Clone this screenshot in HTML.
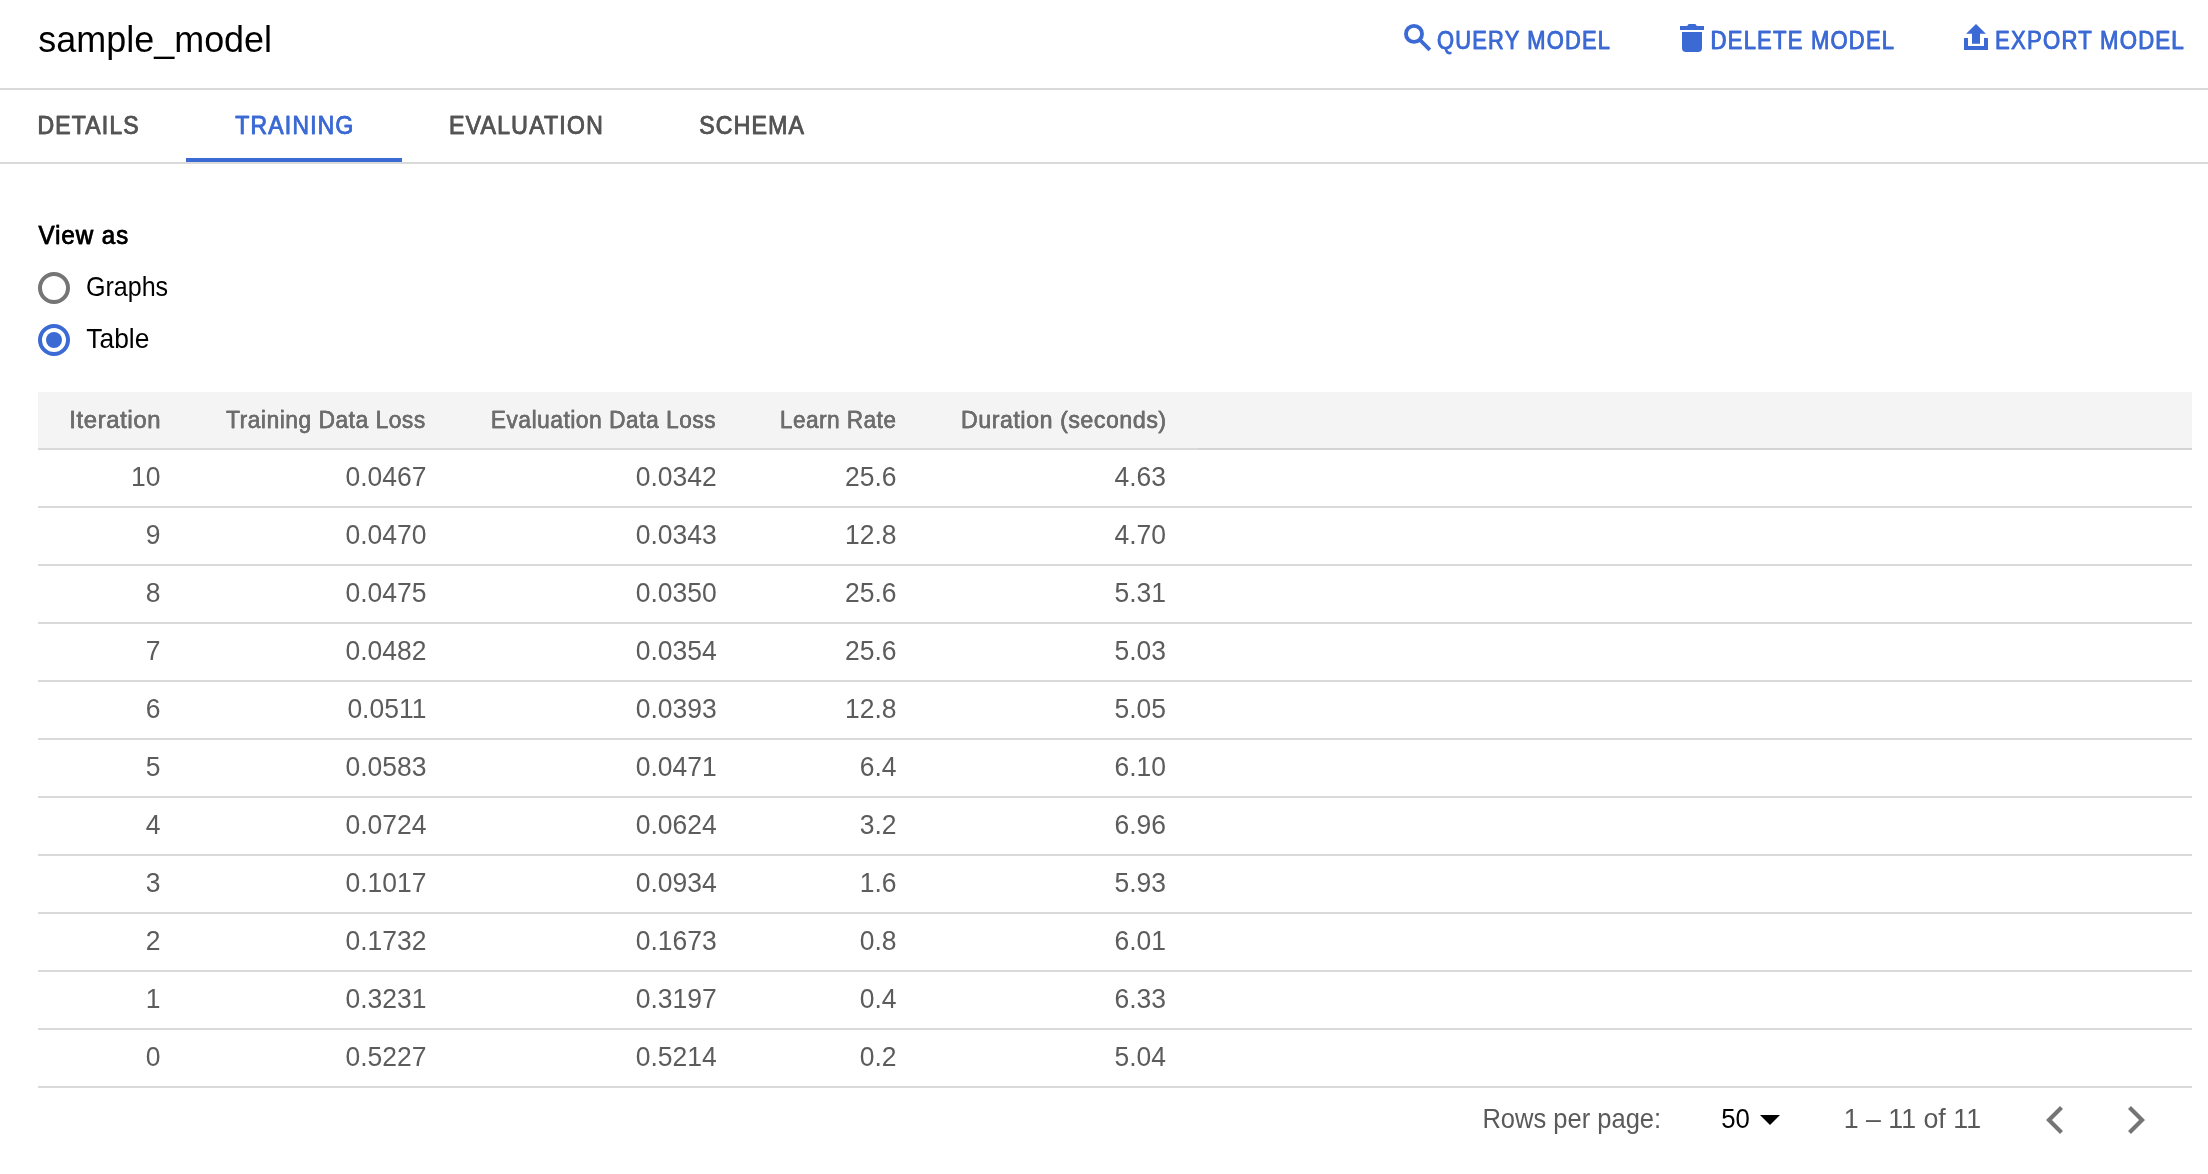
<!DOCTYPE html>
<html><head><meta charset="utf-8"><title>sample_model</title>
<style>html,body{margin:0;padding:0;background:#fff;width:2208px;height:1174px;overflow:hidden;font-family:"Liberation Sans",sans-serif}svg{position:absolute;left:0;top:0;display:block;will-change:transform}</style></head>
<body><svg width="2208" height="1174" viewBox="0 0 2208 1174">
<rect x="0" y="88" width="2208" height="2" fill="#dadada"/>
<rect x="0" y="162" width="2208" height="2" fill="#dadada"/>
<rect x="186" y="158" width="216" height="4" fill="#3c6ad4"/>
<rect x="38" y="392" width="2154" height="56" fill="#f4f4f4"/>
<rect x="38" y="448" width="2154" height="2" fill="#dadada"/>
<rect x="38" y="506" width="2154" height="2" fill="#dadada"/>
<rect x="38" y="564" width="2154" height="2" fill="#dadada"/>
<rect x="38" y="622" width="2154" height="2" fill="#dadada"/>
<rect x="38" y="680" width="2154" height="2" fill="#dadada"/>
<rect x="38" y="738" width="2154" height="2" fill="#dadada"/>
<rect x="38" y="796" width="2154" height="2" fill="#dadada"/>
<rect x="38" y="854" width="2154" height="2" fill="#dadada"/>
<rect x="38" y="912" width="2154" height="2" fill="#dadada"/>
<rect x="38" y="970" width="2154" height="2" fill="#dadada"/>
<rect x="38" y="1028" width="2154" height="2" fill="#dadada"/>
<rect x="38" y="1086" width="2154" height="2" fill="#dadada"/>
<rect x="1198" y="448" width="994" height="2" fill="#d3d3d3"/>
<circle cx="54" cy="288" r="14" fill="none" stroke="#757575" stroke-width="4"/>
<circle cx="54" cy="340" r="14" fill="none" stroke="#3c6ad4" stroke-width="4"/>
<circle cx="54" cy="340" r="8" fill="#3c6ad4"/>
<circle cx="1414" cy="33.9" r="8.03" fill="none" stroke="#3c6ad4" stroke-width="3.85"/>
<path stroke="#3c6ad4" stroke-width="3.85" fill="none" d="M1419.5 39.5 L1429.85 49.85"/>
<rect x="1680" y="26" width="24" height="4" fill="#3c6ad4"/>
<path fill="#3c6ad4" d="M1687 26.2 L1688.6 24 H1695.4 L1697 26.2 Z"/>
<path fill="#3c6ad4" d="M1682 32 H1702 V48 Q1702 52 1698 52 H1686 Q1682 52 1682 48 Z"/>
<path fill="#3c6ad4" d="M1976 24 L1985.9 33.8 L1980 33.8 L1980 43.8 L1972 43.8 L1972 33.8 L1966.1 33.8 Z"/>
<path fill="#3c6ad4" d="M1964 38 H1968 V46 H1984 V38 H1988 V50 H1964 Z"/>
<path fill="#000" d="M1760 1115 H1780 L1770 1125 Z"/>
<path fill="none" stroke="#757575" stroke-width="4.2" stroke-linecap="butt" d="M2061.5 1107.5 L2049 1120 L2061.5 1132.5"/>
<path fill="none" stroke="#757575" stroke-width="4.2" stroke-linecap="butt" d="M2129.5 1107.5 L2142 1120 L2129.5 1132.5"/>
<g transform="translate(38.37,52) scale(0.9714,1)"><text x="0" y="0" font-family="Liberation Sans" font-size="37" font-weight="400" fill="#000000">sample_model</text></g>
<g transform="translate(1436.74,49) scale(0.8620,1)"><text x="0" y="0" font-family="Liberation Sans" font-size="25.4" font-weight="400" fill="#3c6ad4" stroke="#3c6ad4" stroke-width="0.35" letter-spacing="1.4">QUERY MODEL</text><text x="0.6" y="0" font-family="Liberation Sans" font-size="25.4" font-weight="400" fill="#3c6ad4" stroke="#3c6ad4" stroke-width="0.35" letter-spacing="1.4">QUERY MODEL</text></g>
<g transform="translate(1710.37,49) scale(0.8670,1)"><text x="0" y="0" font-family="Liberation Sans" font-size="25.4" font-weight="400" fill="#3c6ad4" stroke="#3c6ad4" stroke-width="0.35" letter-spacing="1.4">DELETE MODEL</text><text x="0.6" y="0" font-family="Liberation Sans" font-size="25.4" font-weight="400" fill="#3c6ad4" stroke="#3c6ad4" stroke-width="0.35" letter-spacing="1.4">DELETE MODEL</text></g>
<g transform="translate(1994.76,49) scale(0.8726,1)"><text x="0" y="0" font-family="Liberation Sans" font-size="25.4" font-weight="400" fill="#3c6ad4" stroke="#3c6ad4" stroke-width="0.35" letter-spacing="1.4">EXPORT MODEL</text><text x="0.6" y="0" font-family="Liberation Sans" font-size="25.4" font-weight="400" fill="#3c6ad4" stroke="#3c6ad4" stroke-width="0.35" letter-spacing="1.4">EXPORT MODEL</text></g>
<g transform="translate(37.31,134) scale(0.8856,1)"><text x="0" y="0" font-family="Liberation Sans" font-size="26.0" font-weight="400" fill="#555555" stroke="#555555" stroke-width="0.45" letter-spacing="1.3">DETAILS</text><text x="0.4" y="0" font-family="Liberation Sans" font-size="26.0" font-weight="400" fill="#555555" stroke="#555555" stroke-width="0.45" letter-spacing="1.3">DETAILS</text></g>
<g transform="translate(235.12,134) scale(0.8855,1)"><text x="0" y="0" font-family="Liberation Sans" font-size="26.0" font-weight="400" fill="#3c6ad4" stroke="#3c6ad4" stroke-width="0.45" letter-spacing="1.3">TRAINING</text><text x="0.4" y="0" font-family="Liberation Sans" font-size="26.0" font-weight="400" fill="#3c6ad4" stroke="#3c6ad4" stroke-width="0.45" letter-spacing="1.3">TRAINING</text></g>
<g transform="translate(448.80,134) scale(0.8917,1)"><text x="0" y="0" font-family="Liberation Sans" font-size="26.0" font-weight="400" fill="#555555" stroke="#555555" stroke-width="0.45" letter-spacing="1.3">EVALUATION</text><text x="0.4" y="0" font-family="Liberation Sans" font-size="26.0" font-weight="400" fill="#555555" stroke="#555555" stroke-width="0.45" letter-spacing="1.3">EVALUATION</text></g>
<g transform="translate(699.03,134) scale(0.8897,1)"><text x="0" y="0" font-family="Liberation Sans" font-size="26.0" font-weight="400" fill="#555555" stroke="#555555" stroke-width="0.45" letter-spacing="1.3">SCHEMA</text><text x="0.4" y="0" font-family="Liberation Sans" font-size="26.0" font-weight="400" fill="#555555" stroke="#555555" stroke-width="0.45" letter-spacing="1.3">SCHEMA</text></g>
<g transform="translate(38.33,244) scale(0.9353,1)"><text x="0" y="0" font-family="Liberation Sans" font-size="25.8" font-weight="400" fill="#000000" stroke="#000000" stroke-width="0.4" letter-spacing="1.0">View as</text><text x="0.45" y="0" font-family="Liberation Sans" font-size="25.8" font-weight="400" fill="#000000" stroke="#000000" stroke-width="0.4" letter-spacing="1.0">View as</text></g>
<g transform="translate(85.89,296) scale(0.9158,1)"><text x="0" y="0" font-family="Liberation Sans" font-size="27.4" font-weight="400" fill="#000000">Graphs</text></g>
<g transform="translate(86.31,348) scale(0.9634,1)"><text x="0" y="0" font-family="Liberation Sans" font-size="27.4" font-weight="400" fill="#000000">Table</text></g>
<g transform="translate(69.18,428) scale(1.0054,1)"><text x="0" y="0" font-family="Liberation Sans" font-size="23.8" font-weight="400" fill="#6d6d6d" stroke="#6d6d6d" stroke-width="0.35" letter-spacing="0.6">Iteration</text><text x="0.2" y="0" font-family="Liberation Sans" font-size="23.8" font-weight="400" fill="#6d6d6d" stroke="#6d6d6d" stroke-width="0.35" letter-spacing="0.6">Iteration</text></g>
<g transform="translate(225.98,428) scale(0.9529,1)"><text x="0" y="0" font-family="Liberation Sans" font-size="23.8" font-weight="400" fill="#6d6d6d" stroke="#6d6d6d" stroke-width="0.35" letter-spacing="0.6">Training Data Loss</text><text x="0.2" y="0" font-family="Liberation Sans" font-size="23.8" font-weight="400" fill="#6d6d6d" stroke="#6d6d6d" stroke-width="0.35" letter-spacing="0.6">Training Data Loss</text></g>
<g transform="translate(490.76,428) scale(0.9514,1)"><text x="0" y="0" font-family="Liberation Sans" font-size="23.8" font-weight="400" fill="#6d6d6d" stroke="#6d6d6d" stroke-width="0.35" letter-spacing="0.6">Evaluation Data Loss</text><text x="0.2" y="0" font-family="Liberation Sans" font-size="23.8" font-weight="400" fill="#6d6d6d" stroke="#6d6d6d" stroke-width="0.35" letter-spacing="0.6">Evaluation Data Loss</text></g>
<g transform="translate(779.88,428) scale(0.9425,1)"><text x="0" y="0" font-family="Liberation Sans" font-size="23.8" font-weight="400" fill="#6d6d6d" stroke="#6d6d6d" stroke-width="0.35" letter-spacing="0.6">Learn Rate</text><text x="0.2" y="0" font-family="Liberation Sans" font-size="23.8" font-weight="400" fill="#6d6d6d" stroke="#6d6d6d" stroke-width="0.35" letter-spacing="0.6">Learn Rate</text></g>
<g transform="translate(960.93,428) scale(0.9713,1)"><text x="0" y="0" font-family="Liberation Sans" font-size="23.8" font-weight="400" fill="#6d6d6d" stroke="#6d6d6d" stroke-width="0.35" letter-spacing="0.6">Duration (seconds)</text><text x="0.2" y="0" font-family="Liberation Sans" font-size="23.8" font-weight="400" fill="#6d6d6d" stroke="#6d6d6d" stroke-width="0.35" letter-spacing="0.6">Duration (seconds)</text></g>
<g transform="translate(1482.41,1128) scale(0.9531,1)"><text x="0" y="0" font-family="Liberation Sans" font-size="26.8" font-weight="400" fill="#5a5a5a">Rows per page:</text></g>
<g transform="translate(1721.27,1128) scale(0.9593,1)"><text x="0" y="0" font-family="Liberation Sans" font-size="26.8" font-weight="400" fill="#000000">50</text></g>
<g transform="translate(1843.66,1128) scale(0.9991,1)"><text x="0" y="0" font-family="Liberation Sans" font-size="26.8" font-weight="400" fill="#5a5a5a">1 – 11 of 11</text></g>
<text transform="translate(160.35,486) scale(0.98,1)" text-anchor="end" font-family="Liberation Sans" font-size="27" fill="#5c5c5c">10</text>
<text transform="translate(426.35,486) scale(0.98,1)" text-anchor="end" font-family="Liberation Sans" font-size="27" fill="#5c5c5c">0.0467</text>
<text transform="translate(716.65,486) scale(0.98,1)" text-anchor="end" font-family="Liberation Sans" font-size="27" fill="#5c5c5c">0.0342</text>
<text transform="translate(896.45,486) scale(0.98,1)" text-anchor="end" font-family="Liberation Sans" font-size="27" fill="#5c5c5c">25.6</text>
<text transform="translate(1166.05,486) scale(0.98,1)" text-anchor="end" font-family="Liberation Sans" font-size="27" fill="#5c5c5c">4.63</text>
<text transform="translate(160.35,544) scale(0.98,1)" text-anchor="end" font-family="Liberation Sans" font-size="27" fill="#5c5c5c">9</text>
<text transform="translate(426.35,544) scale(0.98,1)" text-anchor="end" font-family="Liberation Sans" font-size="27" fill="#5c5c5c">0.0470</text>
<text transform="translate(716.65,544) scale(0.98,1)" text-anchor="end" font-family="Liberation Sans" font-size="27" fill="#5c5c5c">0.0343</text>
<text transform="translate(896.45,544) scale(0.98,1)" text-anchor="end" font-family="Liberation Sans" font-size="27" fill="#5c5c5c">12.8</text>
<text transform="translate(1166.05,544) scale(0.98,1)" text-anchor="end" font-family="Liberation Sans" font-size="27" fill="#5c5c5c">4.70</text>
<text transform="translate(160.35,602) scale(0.98,1)" text-anchor="end" font-family="Liberation Sans" font-size="27" fill="#5c5c5c">8</text>
<text transform="translate(426.35,602) scale(0.98,1)" text-anchor="end" font-family="Liberation Sans" font-size="27" fill="#5c5c5c">0.0475</text>
<text transform="translate(716.65,602) scale(0.98,1)" text-anchor="end" font-family="Liberation Sans" font-size="27" fill="#5c5c5c">0.0350</text>
<text transform="translate(896.45,602) scale(0.98,1)" text-anchor="end" font-family="Liberation Sans" font-size="27" fill="#5c5c5c">25.6</text>
<text transform="translate(1166.05,602) scale(0.98,1)" text-anchor="end" font-family="Liberation Sans" font-size="27" fill="#5c5c5c">5.31</text>
<text transform="translate(160.35,660) scale(0.98,1)" text-anchor="end" font-family="Liberation Sans" font-size="27" fill="#5c5c5c">7</text>
<text transform="translate(426.35,660) scale(0.98,1)" text-anchor="end" font-family="Liberation Sans" font-size="27" fill="#5c5c5c">0.0482</text>
<text transform="translate(716.65,660) scale(0.98,1)" text-anchor="end" font-family="Liberation Sans" font-size="27" fill="#5c5c5c">0.0354</text>
<text transform="translate(896.45,660) scale(0.98,1)" text-anchor="end" font-family="Liberation Sans" font-size="27" fill="#5c5c5c">25.6</text>
<text transform="translate(1166.05,660) scale(0.98,1)" text-anchor="end" font-family="Liberation Sans" font-size="27" fill="#5c5c5c">5.03</text>
<text transform="translate(160.35,718) scale(0.98,1)" text-anchor="end" font-family="Liberation Sans" font-size="27" fill="#5c5c5c">6</text>
<text transform="translate(426.35,718) scale(0.98,1)" text-anchor="end" font-family="Liberation Sans" font-size="27" fill="#5c5c5c">0.0511</text>
<text transform="translate(716.65,718) scale(0.98,1)" text-anchor="end" font-family="Liberation Sans" font-size="27" fill="#5c5c5c">0.0393</text>
<text transform="translate(896.45,718) scale(0.98,1)" text-anchor="end" font-family="Liberation Sans" font-size="27" fill="#5c5c5c">12.8</text>
<text transform="translate(1166.05,718) scale(0.98,1)" text-anchor="end" font-family="Liberation Sans" font-size="27" fill="#5c5c5c">5.05</text>
<text transform="translate(160.35,776) scale(0.98,1)" text-anchor="end" font-family="Liberation Sans" font-size="27" fill="#5c5c5c">5</text>
<text transform="translate(426.35,776) scale(0.98,1)" text-anchor="end" font-family="Liberation Sans" font-size="27" fill="#5c5c5c">0.0583</text>
<text transform="translate(716.65,776) scale(0.98,1)" text-anchor="end" font-family="Liberation Sans" font-size="27" fill="#5c5c5c">0.0471</text>
<text transform="translate(896.45,776) scale(0.98,1)" text-anchor="end" font-family="Liberation Sans" font-size="27" fill="#5c5c5c">6.4</text>
<text transform="translate(1166.05,776) scale(0.98,1)" text-anchor="end" font-family="Liberation Sans" font-size="27" fill="#5c5c5c">6.10</text>
<text transform="translate(160.35,834) scale(0.98,1)" text-anchor="end" font-family="Liberation Sans" font-size="27" fill="#5c5c5c">4</text>
<text transform="translate(426.35,834) scale(0.98,1)" text-anchor="end" font-family="Liberation Sans" font-size="27" fill="#5c5c5c">0.0724</text>
<text transform="translate(716.65,834) scale(0.98,1)" text-anchor="end" font-family="Liberation Sans" font-size="27" fill="#5c5c5c">0.0624</text>
<text transform="translate(896.45,834) scale(0.98,1)" text-anchor="end" font-family="Liberation Sans" font-size="27" fill="#5c5c5c">3.2</text>
<text transform="translate(1166.05,834) scale(0.98,1)" text-anchor="end" font-family="Liberation Sans" font-size="27" fill="#5c5c5c">6.96</text>
<text transform="translate(160.35,892) scale(0.98,1)" text-anchor="end" font-family="Liberation Sans" font-size="27" fill="#5c5c5c">3</text>
<text transform="translate(426.35,892) scale(0.98,1)" text-anchor="end" font-family="Liberation Sans" font-size="27" fill="#5c5c5c">0.1017</text>
<text transform="translate(716.65,892) scale(0.98,1)" text-anchor="end" font-family="Liberation Sans" font-size="27" fill="#5c5c5c">0.0934</text>
<text transform="translate(896.45,892) scale(0.98,1)" text-anchor="end" font-family="Liberation Sans" font-size="27" fill="#5c5c5c">1.6</text>
<text transform="translate(1166.05,892) scale(0.98,1)" text-anchor="end" font-family="Liberation Sans" font-size="27" fill="#5c5c5c">5.93</text>
<text transform="translate(160.35,950) scale(0.98,1)" text-anchor="end" font-family="Liberation Sans" font-size="27" fill="#5c5c5c">2</text>
<text transform="translate(426.35,950) scale(0.98,1)" text-anchor="end" font-family="Liberation Sans" font-size="27" fill="#5c5c5c">0.1732</text>
<text transform="translate(716.65,950) scale(0.98,1)" text-anchor="end" font-family="Liberation Sans" font-size="27" fill="#5c5c5c">0.1673</text>
<text transform="translate(896.45,950) scale(0.98,1)" text-anchor="end" font-family="Liberation Sans" font-size="27" fill="#5c5c5c">0.8</text>
<text transform="translate(1166.05,950) scale(0.98,1)" text-anchor="end" font-family="Liberation Sans" font-size="27" fill="#5c5c5c">6.01</text>
<text transform="translate(160.35,1008) scale(0.98,1)" text-anchor="end" font-family="Liberation Sans" font-size="27" fill="#5c5c5c">1</text>
<text transform="translate(426.35,1008) scale(0.98,1)" text-anchor="end" font-family="Liberation Sans" font-size="27" fill="#5c5c5c">0.3231</text>
<text transform="translate(716.65,1008) scale(0.98,1)" text-anchor="end" font-family="Liberation Sans" font-size="27" fill="#5c5c5c">0.3197</text>
<text transform="translate(896.45,1008) scale(0.98,1)" text-anchor="end" font-family="Liberation Sans" font-size="27" fill="#5c5c5c">0.4</text>
<text transform="translate(1166.05,1008) scale(0.98,1)" text-anchor="end" font-family="Liberation Sans" font-size="27" fill="#5c5c5c">6.33</text>
<text transform="translate(160.35,1066) scale(0.98,1)" text-anchor="end" font-family="Liberation Sans" font-size="27" fill="#5c5c5c">0</text>
<text transform="translate(426.35,1066) scale(0.98,1)" text-anchor="end" font-family="Liberation Sans" font-size="27" fill="#5c5c5c">0.5227</text>
<text transform="translate(716.65,1066) scale(0.98,1)" text-anchor="end" font-family="Liberation Sans" font-size="27" fill="#5c5c5c">0.5214</text>
<text transform="translate(896.45,1066) scale(0.98,1)" text-anchor="end" font-family="Liberation Sans" font-size="27" fill="#5c5c5c">0.2</text>
<text transform="translate(1166.05,1066) scale(0.98,1)" text-anchor="end" font-family="Liberation Sans" font-size="27" fill="#5c5c5c">5.04</text>
</svg></body></html>
